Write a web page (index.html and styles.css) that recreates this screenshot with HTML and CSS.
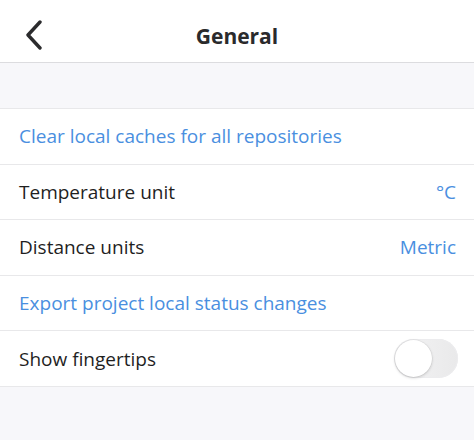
FILE: index.html
```html
<!DOCTYPE html>
<html>
<head>
<meta charset="utf-8">
<link rel="stylesheet" href="styles.css">
</head>
<body>
<div class="screen">
  <header class="navbar">
    <button class="back" aria-label="Back">
      <svg width="18" height="30" viewBox="0 0 18 30"><path d="M15 2 L3 15 L15 28" fill="none" stroke="#2b2b2d" stroke-width="3.4" stroke-linecap="round" stroke-linejoin="round"/></svg>
    </button>
    <h1 class="title">General</h1>
  </header>
  <div class="spacer"></div>
  <ul class="list">
    <li class="row"><span class="label link">Clear local caches for all repositories</span></li>
    <li class="row"><span class="label">Temperature unit</span><span class="value">°C</span></li>
    <li class="row"><span class="label">Distance units</span><span class="value">Metric</span></li>
    <li class="row"><span class="label link">Export project local status changes</span></li>
    <li class="row"><span class="label">Show fingertips</span><span class="toggle"><span class="knob"></span></span></li>
  </ul>
  <div class="footer"></div>
</div>
</body>
</html>
```

FILE: styles.css
```css
* { box-sizing: border-box; }
html, body { margin: 0; padding: 0; }
body {
  font-family: "Open Sans", "Noto Sans", sans-serif;
  background: #f7f7fa;
  width: 474px;
  height: 440px;
  overflow: hidden;
}
.screen { display: flex; flex-direction: column; height: 440px; }
.navbar {
  height: 63px;
  background: #fff;
  border-bottom: 1px solid #dcdcdf;
  display: flex;
  align-items: center;
  justify-content: center;
  position: relative;
  padding-top: 9px;
}
.back {
  position: absolute;
  left: 25px;
  top: 20px;
  border: 0;
  background: none;
  padding: 0;
  display: flex;
}
.title {
  margin: 0;
  font-size: 21px;
  font-weight: 700;
  color: #2a2a2c;
}
.spacer { height: 45px; background: #f7f7fa; }
.list {
  list-style: none;
  margin: 0;
  padding: 0;
  background: #fff;
  border-top: 1px solid #e8e8ea;
}
.row {
  height: 55.6px;
  display: flex;
  align-items: center;
  justify-content: space-between;
  padding: 0 16px 0 19px;
  border-bottom: 1px solid #e8e8ea;
  font-size: 19px;
  color: #1f1f1f;
}
.link { color: #4a8fdf; }
.value { color: #4a8fdf; margin-right: 2px; }
.toggle {
  width: 64px;
  height: 39px;
  border-radius: 20px;
  background: linear-gradient(90deg, #f4f4f5, #e9e9ea);
  position: relative;
  box-shadow: inset 0 0 0 1px #ececee;
}
.knob {
  position: absolute;
  left: 1px;
  top: 1px;
  width: 37px;
  height: 37px;
  border-radius: 50%;
  background: #fff;
  box-shadow: 0 1px 3px rgba(0,0,0,0.18), 0 0 0 0.5px rgba(0,0,0,0.06);
}
.footer { flex: 1; background: #f7f7fa; }
```
